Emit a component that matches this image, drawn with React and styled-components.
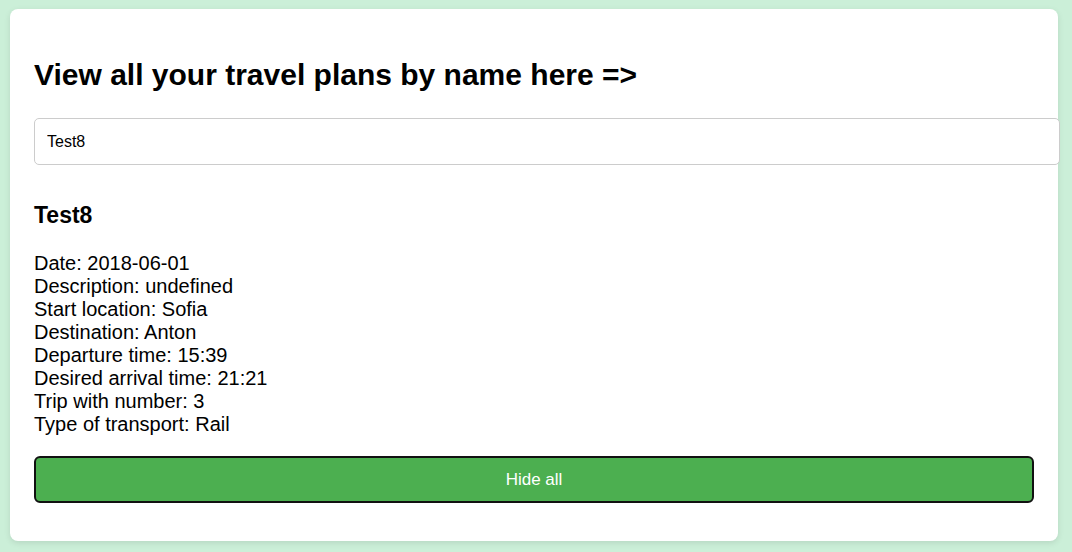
import React from "react";
import styled, { createGlobalStyle } from "styled-components";

const Global = createGlobalStyle`
  html, body {
    margin: 0;
    padding: 0;
    background: #cbefd8;
  }
  body {
    font-family: "Liberation Sans", Arial, sans-serif;
    color: #000;
  }
  #root {
    padding: 9px 10px 11px 10px;
  }
`;

const Card = styled.div`
  width: 1048px;
  box-sizing: border-box;
  background: #fff;
  border-radius: 8px;
  padding: 25px 24px 25px;
  box-shadow: 0 2px 6px rgba(0, 0, 0, 0.1);
`;

const Title = styled.h2`
  font-size: 30px;
  font-weight: bold;
  margin: 24px 0 26px;
  line-height: 34px;
`;

const SearchInput = styled.input`
  display: block;
  width: 100%;
  box-sizing: content-box;
  height: 45px;
  padding: 0 12px;
  border: 1px solid #ccc;
  border-radius: 5px;
  font-family: "Liberation Sans", Arial, sans-serif;
  font-size: 16px;
  color: #000;
  outline: none;
  margin: 0;
`;

const PlanName = styled.h3`
  font-size: 23px;
  font-weight: bold;
  margin: 37px 0 24px;
  line-height: 26px;
`;

const Details = styled.div`
  font-size: 20px;
  line-height: 23px;
  margin: 0 0 20px;
`;

const Line = styled.div``;

const HideButton = styled.button`
  display: block;
  width: 100%;
  height: 47px;
  box-sizing: border-box;
  background: #4caf50;
  border: 2px solid #111;
  border-radius: 6px;
  color: #fff;
  font-family: "Liberation Sans", Arial, sans-serif;
  font-size: 17px;
  cursor: pointer;
  margin-bottom: 13px;
`;

const plan = {
  name: "Test8",
  lines: [
    "Date: 2018-06-01",
    "Description: undefined",
    "Start location: Sofia",
    "Destination: Anton",
    "Departure time: 15:39",
    "Desired arrival time: 21:21",
    "Trip with number: 3",
    "Type of transport: Rail",
  ],
};

export default function App() {
  return (
    <>
      <Global />
      <Card>
        <Title>View all your travel plans by name here =&gt;</Title>
        <SearchInput defaultValue="Test8" />
        <PlanName>{plan.name}</PlanName>
        <Details>
          {plan.lines.map((l) => (
            <Line key={l}>{l}</Line>
          ))}
        </Details>
        <HideButton>Hide all</HideButton>
      </Card>
    </>
  );
}
